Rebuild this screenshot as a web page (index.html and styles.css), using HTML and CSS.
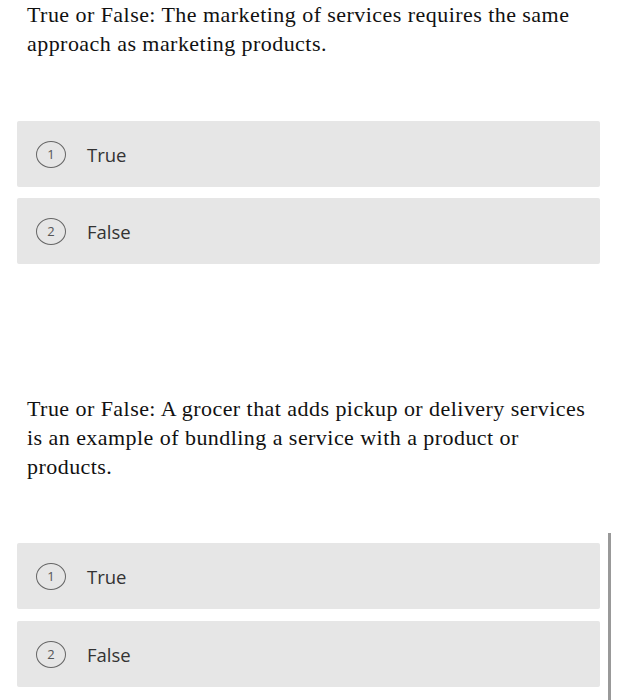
FILE: index.html
```html
<!DOCTYPE html>
<html>
<head>
<meta charset="utf-8">
<link rel="stylesheet" href="styles.css">
</head>
<body>
<div class="page">
  <section class="question q1">
    <p class="prompt">True or False: The marketing of services requires the same approach as marketing products.</p>
    <div class="options">
      <div class="option"><span class="num">1</span><span class="label">True</span></div>
      <div class="option"><span class="num">2</span><span class="label">False</span></div>
    </div>
  </section>
  <section class="question q2">
    <p class="prompt">True or False: A grocer that adds pickup or delivery services is an example of bundling a service with a product or products.</p>
    <div class="options">
      <div class="option"><span class="num">1</span><span class="label">True</span></div>
      <div class="option"><span class="num">2</span><span class="label">False</span></div>
    </div>
  </section>
  <div class="scrollbar"></div>
</div>
</body>
</html>
```
FILE: styles.css
```css
html, body {
  margin: 0;
  padding: 0;
  background: #fff;
}
.page {
  position: relative;
  width: 617px;
  height: 700px;
  overflow: hidden;
  padding: 0 17px;
  box-sizing: border-box;
}
.question {
  display: flex;
  flex-direction: column;
}
.q2 {
  margin-top: 130px;
}
.prompt {
  margin: 0;
  padding: 0 8px 0 10px;
  font-family: "Liberation Serif", "Times New Roman", serif;
  font-size: 22px;
  letter-spacing: 0.45px;
  line-height: 29px;
  color: #111;
}
.q1 .prompt { margin-bottom: 63px; }
.q2 .prompt { margin-bottom: 62px; }
.options {
  display: flex;
  flex-direction: column;
  gap: 11px;
}
.q2 .options { gap: 12px; }
.option {
  display: flex;
  align-items: center;
  height: 66px;
  background: #e6e6e6;
  border-radius: 2px;
  padding-left: 19px;
}
.num {
  display: flex;
  align-items: center;
  justify-content: center;
  width: 30px;
  height: 27px;
  border: 1.5px solid #666;
  border-radius: 50%;
  box-sizing: border-box;
  font-family: "Open Sans", sans-serif;
  font-size: 13px;
  color: #555;
}
.label {
  margin-left: 21px;
  font-family: "Open Sans", sans-serif;
  font-size: 18.5px;
  color: #333;
}
.scrollbar {
  position: absolute;
  left: 608px;
  top: 533px;
  width: 3px;
  height: 167px;
  background: #999;
}
```
